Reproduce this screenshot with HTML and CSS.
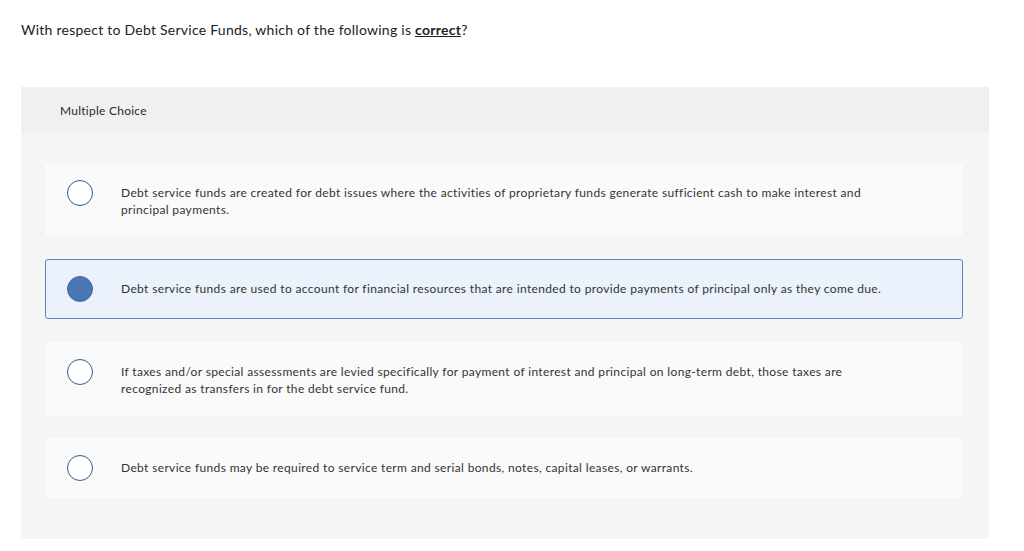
FILE: index.html
```html
<!DOCTYPE html>
<html>
<head>
<meta charset="utf-8">
<link rel="stylesheet" href="styles.css">
</head>
<body>
<p class="question">With respect to Debt Service Funds, which of the following is <u class="em">correct</u>?</p>
<section class="panel">
  <header class="panel-header">Multiple Choice</header>
  <div class="panel-body">
    <div class="option">
      <span class="radio"></span>
      <span class="label">Debt service funds are created for debt issues where the activities of proprietary funds generate sufficient cash to make interest and principal payments.</span>
    </div>
    <div class="option selected">
      <span class="radio"></span>
      <span class="label">Debt service funds are used to account for financial resources that are intended to provide payments of principal only as they come due.</span>
    </div>
    <div class="option">
      <span class="radio"></span>
      <span class="label">If taxes and/or special assessments are levied specifically for payment of interest and principal on long-term debt, those taxes are recognized as transfers in for the debt service fund.</span>
    </div>
    <div class="option">
      <span class="radio"></span>
      <span class="label">Debt service funds may be required to service term and serial bonds, notes, capital leases, or warrants.</span>
    </div>
  </div>
</section>
</body>
</html>
```
FILE: styles.css
```css
html, body {
  margin: 0;
  padding: 0;
  background: #ffffff;
  font-family: Lato, "Open Sans", sans-serif;
  color: #2b2b2b;
}
.question {
  margin: 0;
  padding: 20px 0 0 21px;
  font-size: 14px;
  line-height: 20px;
  letter-spacing: 0.25px;
  color: #222;
}
.em {
  font-weight: 700;
}
.panel {
  margin: 47px 35px 0 21px;
  background: #f5f5f5;
}
.panel-header {
  height: 46px;
  background: #f0f0f0;
  padding-left: 39px;
  display: flex;
  align-items: center;
  font-size: 12px;
  letter-spacing: 0.25px;
  color: #2b2b2b;
}
.panel-body {
  padding: 30px 26px 41px 24px;
  display: flex;
  flex-direction: column;
  gap: 23px;
}
.option {
  display: flex;
  align-items: flex-start;
  background: #fafafa;
  border: 1px solid #fafafa;
  border-radius: 3px;
  padding: 16px 78px 16px 21px;
  gap: 28px;
}
.option.selected {
  background: #ebf2fb;
  border-color: #5a86c4;
}
.radio {
  flex: none;
  box-sizing: border-box;
  width: 26px;
  height: 26px;
  border: 1.3px solid #2c5a98;
  border-radius: 50%;
  background: #fff;
}
.selected .radio {
  background: #4a76b3;
  border-color: #3f6aa6;
}
.label {
  padding: 4px 0 1px;
  font-size: 12px;
  line-height: 17px;
  letter-spacing: 0.35px;
  color: #333;
}
```
